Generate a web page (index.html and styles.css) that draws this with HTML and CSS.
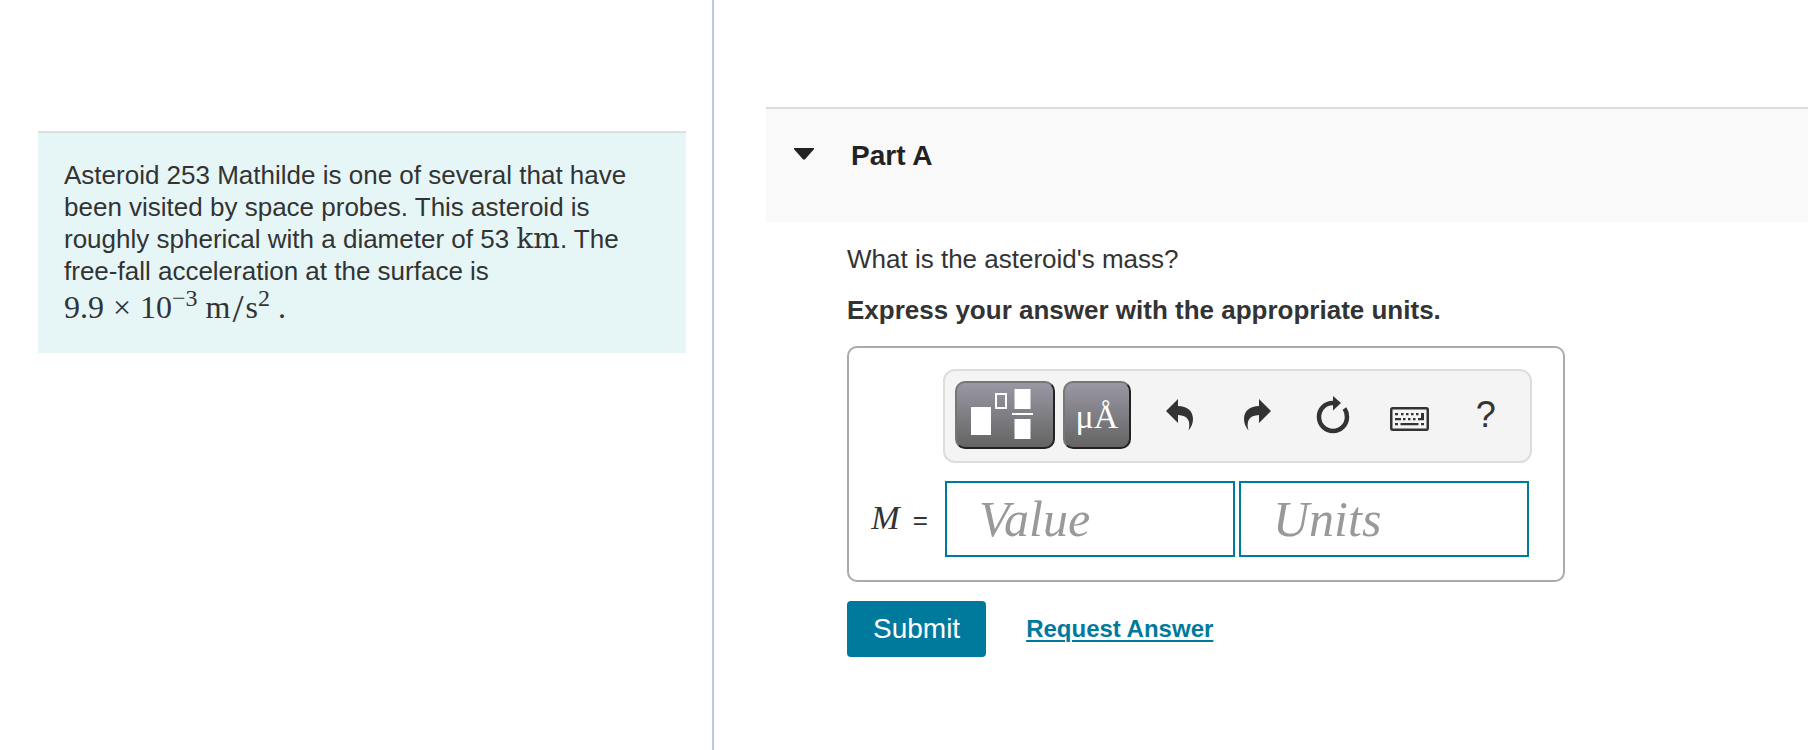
FILE: index.html
```html
<!DOCTYPE html>
<html lang="en">
<head>
    <meta charset="UTF-8">
    <meta name="viewport" content="width=device-width, initial-scale=1.0">
    <title>Part A</title>
    <link rel="stylesheet" href="styles.css">
</head>
<body>

    <aside class="problem-panel">
        <div class="problem">
            <p>Asteroid 253 Mathilde is one of several that have been visited by space probes. This asteroid is roughly spherical with a diameter of 53 <span class="unit">km</span>. The free-fall acceleration at the surface is</p>
            <p class="formula">9.9 <span class="times">×</span> 10<sup>−3</sup> m<span class="slash">/</span>s<sup>2</sup> .</p>
        </div>
    </aside>

    <main class="work-panel">
        <header class="part-header">
            <button class="toggle" aria-label="Collapse part">
                <svg width="22" height="12" viewBox="0 0 22 12"><path d="M1.5 0h19q1.200 .6.2 1.600L12.300 11q-1.300 1.400-2.600 0L1.300 1.600Q.3.600 1.500 0z" fill="#222"/></svg>
            </button>
            <h1>Part A</h1>
        </header>

        <form class="part-body" onsubmit="return false">
            <p>What is the asteroid's mass?</p>
            <p class="instructions">Express your answer with the appropriate units.</p>

            <div class="answer-box">
                <div class="toolbar">
                    <button type="button" class="tool dark templates" aria-label="Templates">
                        <svg width="64" height="52" viewBox="0 0 64 52">
                            <path d="M1 19h20v28H1zM44.500 1h16v20h-16zM44.500 31h16v20h-16zM42 25h21v2H42z" fill="#fff"/>
                            <path d="M26 6h10v14H26z" fill="none" stroke="#fff" stroke-width="2"/>
                        </svg>
                    </button>
                    <button type="button" class="tool dark symbols">μÅ</button>
                    <button type="button" class="tool" aria-label="Undo">
                        <svg width="28" height="32" viewBox="0 0 28 32"><path d="M0 12 12 0v7c9 0 15 5 15 13 0 4-1.500 8-4.500 11.500C25 22 22 16.500 12 16v8z" fill="#333"/></svg>
                    </button>
                    <button type="button" class="tool" aria-label="Redo">
                        <svg width="28" height="32" viewBox="0 0 28 32"><path d="M28 12 16 0v7C7 7 1 12 1 20c0 4 1.500 8 4.500 11.500C3 22 6 16.500 16 16v8z" fill="#333"/></svg>
                    </button>
                    <button type="button" class="tool" aria-label="Reset">
                        <svg width="34" height="38" viewBox="0 0 34 38"><path d="M18 7C9 6.300 3 13.500 3 21a14 14 0 0 0 28 0c0-3-.8-6-2.500-8.500" fill="none" stroke="#333" stroke-width="4.500"/><path d="M17 0l8 7-8 7.500z" fill="#333"/></svg>
                    </button>
                    <button type="button" class="tool keyboard" aria-label="Keyboard">
                        <svg width="39" height="24" viewBox="0 0 39 24"><rect x="1.250" y="1.250" width="36.500" height="21.500" rx="1.500" fill="none" stroke="#333" stroke-width="2.500"/><path d="M5 6h3v2.300H5zM11 6h2.500v2.300H11zM16 6h2.500v2.300H16zM21 6h2.500v2.300H21zM26 6h2.500v2.300H26zM5 11h6v2.300H5zM13 11h2.500v2.300H13zM18 11h2.500v2.300H18zM23 11h2.500v2.300H23zM28 11h3V6h3v7.300h-6zM5 16h3v2.300H5zM10.500 16h18v2.300h-18zM31 16h3v2.300h-3z" fill="#333"/></svg>
                    </button>
                    <button type="button" class="tool help" aria-label="Help">?</button>
                </div>
                <div class="answer-row">
                    <label for="value"><span class="variable">M</span> =</label>
                    <input type="text" id="value" placeholder="Value">
                    <input type="text" id="units" placeholder="Units" aria-label="Units">
                </div>
            </div>

            <div class="actions">
                <button class="submit">Submit</button>
                <a href="#">Request Answer</a>
            </div>
        </form>
    </main>

</body>
</html>
```
FILE: styles.css
```css
* {
    box-sizing: border-box;
}

body {
    font-family: "Liberation Sans", Arial, sans-serif;
    font-size: 26px;
    line-height: 32px;
    background-color: white;
    color: #333;
    margin: 0;
    display: flex;
    min-height: 100vh;
}

p, h1 {
    margin: 0;
}

button {
    font-family: inherit;
    color: inherit;
    background: none;
    border: none;
    padding: 0;
    cursor: pointer;
}

svg {
    display: block;
}

.problem-panel {
    flex: 0 0 714px;
    padding: 131px 26px 0 38px;
    border-right: 2px solid #b8cbe0;
}

.problem {
    padding: 26px;
    background-color: #e6f6f7;
    border-top: 2px solid #dcdfdf;
}

.unit {
    font-family: "DejaVu Serif", serif;
    font-size: 28px;
    line-height: 24px;
}

.formula {
    font-family: "Liberation Serif", "Times New Roman", serif;
    font-size: 32px;
    line-height: 40px;
}

.formula sup {
    font-size: 24px;
    line-height: 0;
    vertical-align: 12px;
}

.times {
    margin: 0 1px;
}

.slash {
    margin: 0 2px;
    font-size: 40px;
    line-height: 0;
    vertical-align: -4px;
}

.work-panel {
    flex: 1;
    min-width: 0;
    padding: 107px 0 0 52px;
}

.part-header {
    display: flex;
    align-items: flex-start;
    gap: 36px;
    height: 115px;
    padding: 31px 27px;
    background-color: #f9f9f9;
    border-top: 2px solid #ddd;
    color: #222;
}

.part-header h1 {
    font-size: 28px;
}

.toggle {
    padding-top: 8px;
}

.part-body {
    padding: 21px 81px 0;
}

.instructions {
    margin-top: 19px;
    font-weight: bold;
}

.answer-box {
    display: flex;
    flex-direction: column;
    align-items: flex-end;
    gap: 18px;
    max-width: 718px;
    margin-top: 20px;
    padding: 21px 31px 23px 20px;
    border: 2px solid #aaa;
    border-radius: 10px;
}

.toolbar {
    display: flex;
    align-items: center;
    width: 589px;
    height: 94px;
    padding: 0 6px 2px 10px;
    background-color: #f4f4f4;
    border: 2px solid #ddd;
    border-radius: 12px;
}

.tool {
    display: flex;
    flex: 1;
    align-items: center;
    justify-content: center;
    height: 68px;
}

.dark {
    flex: none;
    color: white;
    background-image: linear-gradient(#9a98a4, #646464);
    border: 2px solid;
    border-color: #767676 #222 #222 #767676;
    border-radius: 10px;
}

.templates {
    width: 100px;
    margin-right: 8px;
    padding: 0 6px 2px 0;
}

.symbols {
    width: 68px;
    margin-right: 11px;
    padding: 4px 0 0;
    font-family: "Liberation Serif", "Times New Roman", serif;
    font-size: 34px;
}

.keyboard {
    padding: 8px 0 0;
}

.help {
    font-size: 36px;
}

.answer-row {
    display: flex;
    align-items: center;
    gap: 4px;
    padding-right: 3px;
}

.answer-row label {
    margin-right: 13px;
}

.variable {
    margin-right: 6px;
    font-family: "Liberation Serif", "Times New Roman", serif;
    font-size: 34px;
    font-style: italic;
}

.answer-row input {
    width: 290px;
    height: 76px;
    padding: 0 32px;
    font-family: "Liberation Serif", "Times New Roman", serif;
    font-size: 50px;
    font-style: italic;
    border: 2px solid #007a9c;
    background-color: white;
}

.answer-row input::placeholder {
    color: #999;
}

.actions {
    display: flex;
    align-items: center;
    gap: 40px;
    margin-top: 19px;
}

.submit {
    height: 56px;
    padding: 0 26px;
    font-size: 28px;
    color: white;
    background-color: #007a9c;
    border-radius: 4px;
}

.actions a {
    font-size: 24px;
    font-weight: bold;
    color: #007a9c;
    text-decoration-thickness: 2px;
    text-underline-offset: 3px;
}
```
